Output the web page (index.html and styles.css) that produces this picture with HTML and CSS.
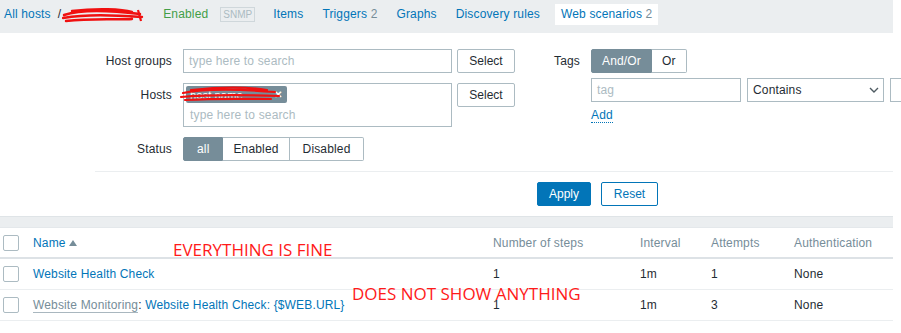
FILE: index.html
```html
<!DOCTYPE html>
<html>
<head>
<meta charset="utf-8">
<link rel="stylesheet" href="styles.css">
</head>
<body>
<div class="page">
  <nav class="nav">
    <a class="link nav-first">All hosts</a>
    <span class="sep">/</span>
    <span class="redacted-host">
      <svg width="82" height="18" viewBox="0 0 82 18"><path d="M2 9 C20 3 45 4 78 8 M1 12 C25 8 50 9 80 11 M4 15 C30 12 55 14 70 13 M10 5 C35 2 60 3 70 6" fill="none" stroke="#f01010" stroke-width="2.4" stroke-linecap="round"/><path d="M76 4 L79 15" stroke="#f01010" stroke-width="2.2"/></svg>
    </span>
    <span class="status-ok">Enabled</span>
    <span class="snmp">SNMP</span>
    <a class="link nav-item">Items</a>
    <a class="link nav-item">Triggers <span class="count">2</span></a>
    <a class="link nav-item">Graphs</a>
    <a class="link nav-item">Discovery rules</a>
    <a class="link nav-tab">Web scenarios <span class="count">2</span></a>
  </nav>

  <section class="filter">
    <div class="filter-cols">
      <div class="form-grid left">
        <label class="lbl">Host groups</label>
        <div class="field-row">
          <div class="input wide"><span class="ph">type here to search</span></div>
          <button class="btn-alt">Select</button>
        </div>
        <label class="lbl">Hosts</label>
        <div class="field-row">
          <div class="multiselect">
            <div class="chip-line">
              <span class="chip"><span class="chip-text">host name</span><span class="chip-x">✕</span>
                <svg class="scribble" width="110" height="20" viewBox="0 0 110 20"><path d="M4 9 C30 4 60 5 96 8 M2 13 C35 10 70 11 100 12 M6 16 C40 14 70 15 92 15 M12 6 C40 3 70 3 88 6" fill="none" stroke="#f01010" stroke-width="2.2" stroke-linecap="round"/></svg>
              </span>
            </div>
            <span class="ph ms-ph">type here to search</span>
          </div>
          <button class="btn-alt">Select</button>
        </div>
        <label class="lbl">Status</label>
        <div class="radio">
          <span class="seg on">all</span><span class="seg">Enabled</span><span class="seg seg-wide">Disabled</span>
        </div>
      </div>

      <div class="form-grid right">
        <label class="lbl">Tags</label>
        <div class="tags">
          <div class="radio">
            <span class="seg on andor">And/Or</span><span class="seg">Or</span>
          </div>
          <div class="tag-row">
            <div class="input tag"><span class="ph">tag</span></div>
            <div class="input select"><span>Contains</span>
              <svg width="10" height="6" viewBox="0 0 10 6"><path d="M1 1 L5 5 L9 1" fill="none" stroke="#4f5b62" stroke-width="1.4"/></svg>
            </div>
            <div class="input value"></div>
          </div>
          <a class="add">Add</a>
        </div>
      </div>
    </div>
    <div class="filter-actions">
      <button class="btn-main">Apply</button>
      <button class="btn-outline">Reset</button>
    </div>
  </section>

  <div class="gap"></div>

  <table class="list">
    <colgroup>
      <col class="c-check"><col class="c-name"><col class="c-steps"><col class="c-int"><col class="c-att"><col>
    </colgroup>
    <thead>
      <tr>
        <th class="chk"><span class="box"></span></th>
        <th><a class="link">Name</a><span class="arrow"></span></th>
        <th>Number of steps</th>
        <th>Interval</th>
        <th>Attempts</th>
        <th>Authentication</th>
      </tr>
    </thead>
    <tbody>
      <tr>
        <td class="chk"><span class="box"></span></td>
        <td><a class="link">Website Health Check</a></td>
        <td>1</td><td>1m</td><td>1</td><td>None</td>
      </tr>
      <tr>
        <td class="chk"><span class="box"></span></td>
        <td><a class="tmpl">Website Monitoring</a>: <a class="link">Website Health Check: {$WEB.URL}</a></td>
        <td>1</td><td>1m</td><td>3</td><td>None</td>
      </tr>
    </tbody>
  </table>

  <div class="note note-fine">EVERYTHING IS FINE</div>
  <div class="note note-bad">DOES NOT SHOW ANYTHING</div>
</div>
</body>
</html>
```

FILE: styles.css
```css
* { box-sizing: border-box; }
html, body { margin: 0; padding: 0; background: #fff; }
body {
  font-family: "Liberation Sans", Arial, sans-serif;
  font-size: 12px;
  letter-spacing: 0.15px;
  color: #1f2c33;
  width: 901px;
  height: 333px;
  overflow: hidden;
}
.page { width: 893px; position: relative; }
.link { color: #0275b8; text-decoration: none; }
.count { color: #768d99; }

.nav {
  background: #ebeef0;
  display: flex;
  align-items: center;
  height: 33px;
  padding: 4px 0 8px 4px;
}
.nav > * { line-height: 21px; }
.sep { margin-left: 7px; color: #1f2c33; }
.redacted-host { display: flex; align-items: center; margin-left: 1px; width: 82px; height: 21px; }
.status-ok { color: #429e47; margin-left: 19px; }
.snmp {
  margin-left: 12px;
  width: 35px;
  text-align: center;
  border: 1px solid #cfd7db;
  color: #acbbc2;
  font-size: 10px;
  letter-spacing: 0;
  line-height: 13px !important;
  height: 15px;
}
.nav-item { margin-left: 19px; }
.snmp + .nav-item { margin-left: 18px; }
.nav-tab {
  margin-left: 15px;
  background: #fff;
  padding: 0 6px;
  height: 21px;
}

.filter {
  border-bottom: 1px solid #dfe4e7;
  padding: 16px 0 10px;
}
.filter-cols { display: flex; }
.form-grid {
  display: grid;
  column-gap: 11px;
  row-gap: 10px;
  align-items: start;
}
.left { grid-template-columns: 172px auto; width: 514px; }
.right { grid-template-columns: 66px auto; }
.lbl { text-align: right; line-height: 24px; }
.field-row { display: flex; gap: 5px; align-items: start; }
.input {
  height: 24px;
  border: 1px solid #acbbc2;
  background: #fff;
  padding: 0 5px;
  line-height: 22px;
}
.wide { width: 269px; }
.ph { color: #acbbc2; }
.btn-alt {
  height: 24px;
  width: 58px;
  background: #fff;
  border: 1px solid #acbbc2;
  border-radius: 2px;
  color: #1f2c33;
  font: inherit;
  padding: 0;
}
.multiselect {
  width: 269px;
  height: 44px;
  border: 1px solid #acbbc2;
  padding: 2px 2px 0;
}
.chip-line { height: 18px; }
.chip {
  position: relative;
  display: inline-flex;
  align-items: center;
  justify-content: space-between;
  width: 101px;
  height: 17px;
  background: #768d99;
  color: #fff;
  border-radius: 2px;
  padding: 0 5px 0 4px;
  font-size: 11px;
}
.chip-x { font-size: 10px; font-weight: bold; }
.scribble { position: absolute; left: -7px; top: -2px; }
.ms-ph { display: block; padding-left: 4px; line-height: 22px; }

.radio { display: inline-flex; }
.seg {
  height: 24px;
  line-height: 22px;
  border: 1px solid #acbbc2;
  border-left: none;
  padding: 0 10px;
  background: #fff;
}
.seg.seg-wide { padding: 0 13px; }
.seg:first-child { border-left: 1px solid #acbbc2; border-radius: 2px 0 0 2px; }
.seg:last-child { border-radius: 0 2px 2px 0; }
.seg.on { background: #768d99; color: #fff; border-color: #768d99; padding: 0 13px; }
.seg.andor { padding: 0 10px; }

.tags { display: flex; flex-direction: column; align-items: flex-start; }
.tag-row { display: flex; gap: 6px; margin-top: 5px; width: 330px; }
.tag { width: 150px; flex: none; }
.select {
  width: 137px;
  flex: none;
  display: flex;
  align-items: center;
  justify-content: space-between;
  padding-right: 4px;
}
.value { width: 60px; flex: none; }
.add {
  color: #0275b8;
  margin-top: 6px;
  line-height: 14px;
  border-bottom: 1px dotted #0275b8;
}

.filter-actions {
  margin: 10px 0 0 95px;
  border-top: 1px solid #ebeef0;
  padding: 10px 0 0 442px;
  display: flex;
  gap: 10px;
}
.btn-main, .btn-outline {
  height: 24px;
  font: inherit;
  border-radius: 2px;
  padding: 0;
}
.btn-main { width: 54px; background: #0275b8; border: 1px solid #0275b8; color: #fff; }
.btn-outline { width: 57px; background: #fff; border: 1px solid #0275b8; color: #0275b8; }

.gap { height: 11px; background: #ebeef0; border-bottom: 1px solid #e4e8eb; }

.list { width: 893px; border-collapse: collapse; table-layout: fixed; }
.c-check { width: 33px; }
.c-name { width: 460px; }
.c-steps { width: 147px; }
.c-int { width: 71px; }
.c-att { width: 83px; }
.list th {
  text-align: left;
  font-weight: normal;
  color: #768d99;
  height: 30px;
  padding: 0;
  border-bottom: 2px solid #dde2e6;
  white-space: nowrap;
}
.list td {
  height: 31px;
  padding: 0;
  border-bottom: 1px solid #ebeef0;
  white-space: nowrap;
}
.list .chk { padding-left: 3px; }
.box {
  display: block;
  width: 16px;
  height: 16px;
  border: 1px solid #acbbc2;
  border-radius: 2px;
  background: #fff;
}
.arrow {
  display: inline-block;
  margin-left: 3px;
  width: 0; height: 0;
  border-left: 4px solid transparent;
  border-right: 4px solid transparent;
  border-bottom: 6px solid #768d99;
  vertical-align: 1px;
}
.tmpl { color: #768d99; border-bottom: 1px solid #a9b7bf; }

.note {
  position: absolute;
  color: #ff1a1a;
  font-family: "Open Sans", sans-serif;
  font-size: 17px;
  letter-spacing: 0;
  white-space: nowrap;
}
.note-fine { left: 173px; top: 238px; }
.note-bad { left: 352px; top: 282px; }
```
